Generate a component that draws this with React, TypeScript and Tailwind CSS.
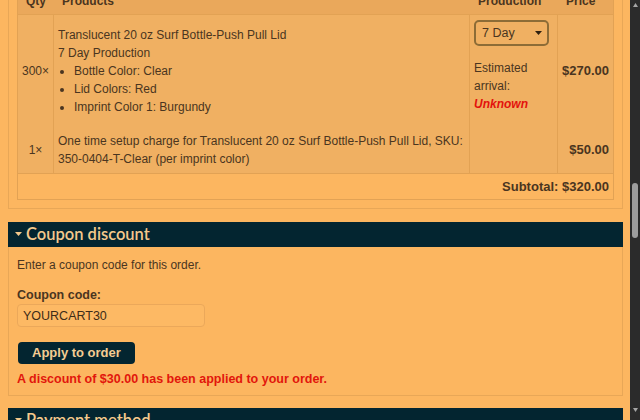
import React from 'react';

const line = 'border-[#e2a254]';
const cols = 'grid grid-cols-[36px_416px_88px_55px]';

function Caret({ className }: { className?: string }) {
  return (
    <svg width="7" height="4" viewBox="0 0 7 4" className={className}>
      <path d="M0 0h7L3.5 4z" fill="currentColor" />
    </svg>
  );
}

function SectionBar({ title }: { title: string }) {
  return (
    <div className="flex h-[25px] items-center bg-[#032530] pl-[7px] text-[#f4c98c]">
      <Caret className="mr-[4px] mb-px" />
      <span className="font-['Lato',sans-serif] text-[16.5px] font-semibold leading-[25px]">
        {title}
      </span>
    </div>
  );
}

function CartTable() {
  return (
    <div className={`border-x border-b ${line}`}>
      {/* header row, partly scrolled out of view */}
      <div className={`${cols} h-[26px] border-b ${line} bg-[#eaa85b] font-bold leading-[25px]`}>
        <div className="pl-2">Qty</div>
        <div className="pl-2">Products</div>
        <div className="pl-2">Production</div>
        <div className="pl-2">Price</div>
      </div>

      <div className={`${cols} h-[112px] bg-[#f0b062]`}>
        <div className={`flex items-center justify-center border-r ${line}`}>300×</div>
        <div className={`flex flex-col justify-center border-r ${line} pl-[4px]`}>
          <div>Translucent 20 oz Surf Bottle-Push Pull Lid</div>
          <div>7 Day Production</div>
          <ul className="list-disc pl-[16px]">
            <li>Bottle Color: Clear</li>
            <li>Lid Colors: Red</li>
            <li>Imprint Color 1: Burgundy</li>
          </ul>
        </div>
        <div className={`border-r ${line} pl-[4px] pt-[5px]`}>
          <div className="flex h-[26px] w-[75px] items-center justify-between rounded-[5px] border-2 border-[#8d6c36] pl-[6px] pr-[5px] text-[12.5px]">
            <span>7 Day</span>
            <Caret className="text-[#2e2010]" />
          </div>
          <div className="mt-[13px]">
            Estimated
            <br />
            arrival:
            <div className="font-bold italic text-[#e3130c]">Unknown</div>
          </div>
        </div>
        <div className="flex items-center justify-end pr-[4px] text-[13px] font-bold">$270.00</div>
      </div>

      <div className={`${cols} h-[46px] bg-[#f0b062]`}>
        <div className={`flex items-center justify-center border-r ${line}`}>1×</div>
        <div className={`flex flex-col justify-center whitespace-nowrap border-r ${line} pl-[4px]`}>
          <div>One time setup charge for Translucent 20 oz Surf Bottle-Push Pull Lid, SKU:</div>
          <div>350-0404-T-Clear (per imprint color)</div>
        </div>
        <div className={`border-r ${line}`} />
        <div className="flex items-center justify-end pr-[4px] text-[13px] font-bold">$50.00</div>
      </div>

      <div className={`flex h-[26px] items-center justify-end border-t ${line} pr-[4px] text-[13px] font-bold`}>
        Subtotal: $320.00
      </div>
    </div>
  );
}

function CouponSection() {
  return (
    <div className="mt-[13px]">
      <SectionBar title="Coupon discount" />
      <div className="border-x border-b border-[#e8a757] pb-[7px] pl-[8px] pt-[9px]">
        <p>Enter a coupon code for this order.</p>
        <label className="mt-[12px] block text-[12.5px] font-bold">Coupon code:</label>
        <input
          readOnly
          defaultValue="YOURCART30"
          className="block h-[23px] w-[188px] rounded-[4px] border border-[#eba85a] bg-[#fdb964] pl-[5px] text-[12.5px] text-[#3e2c18] outline-none"
        />
        <button className="ml-px mt-[15px] block h-[22px] rounded-[4px] bg-[#032530] px-[14px] text-[13px] font-bold leading-[22px] text-[#f4cc92]">
          Apply to order
        </button>
        <p className="mt-[6px] text-[12.5px] font-bold text-[#e2160c]">
          A discount of $30.00 has been applied to your order.
        </p>
      </div>
    </div>
  );
}

function Scrollbar() {
  return (
    <div className="flex w-[10px] flex-col items-center bg-[#2b2b2b] text-[#a5a5a5]">
      <svg width="5" height="4" viewBox="0 0 5 4" className="mt-[3px]">
        <path d="M0 4h5L2.5 0z" fill="currentColor" />
      </svg>
      <div className="mt-[176px] h-[55px] w-[6px] rounded-full bg-[#9d9d9d]" />
      <div className="flex-1" />
      <svg width="5" height="4" viewBox="0 0 5 4" className="mb-[8px]">
        <path d="M0 0h5L2.5 4z" fill="currentColor" />
      </svg>
    </div>
  );
}

export default function App() {
  return (
    <div className="flex h-[420px] w-[640px] overflow-hidden bg-[#fcb660] font-['Liberation_Sans',Arial,sans-serif] text-[12px] leading-[18px] text-[#4a3520]">
      <div className="w-[630px] overflow-hidden pl-2 pr-[7px]">
        <div className="-mt-[11px]">
          <div className="border-x border-b border-[#e8a757] px-2 pb-[8px]">
            <CartTable />
          </div>
          <CouponSection />
          <div className="mt-[12px]">
            <SectionBar title="Payment method" />
          </div>
        </div>
      </div>
      <Scrollbar />
    </div>
  );
}
